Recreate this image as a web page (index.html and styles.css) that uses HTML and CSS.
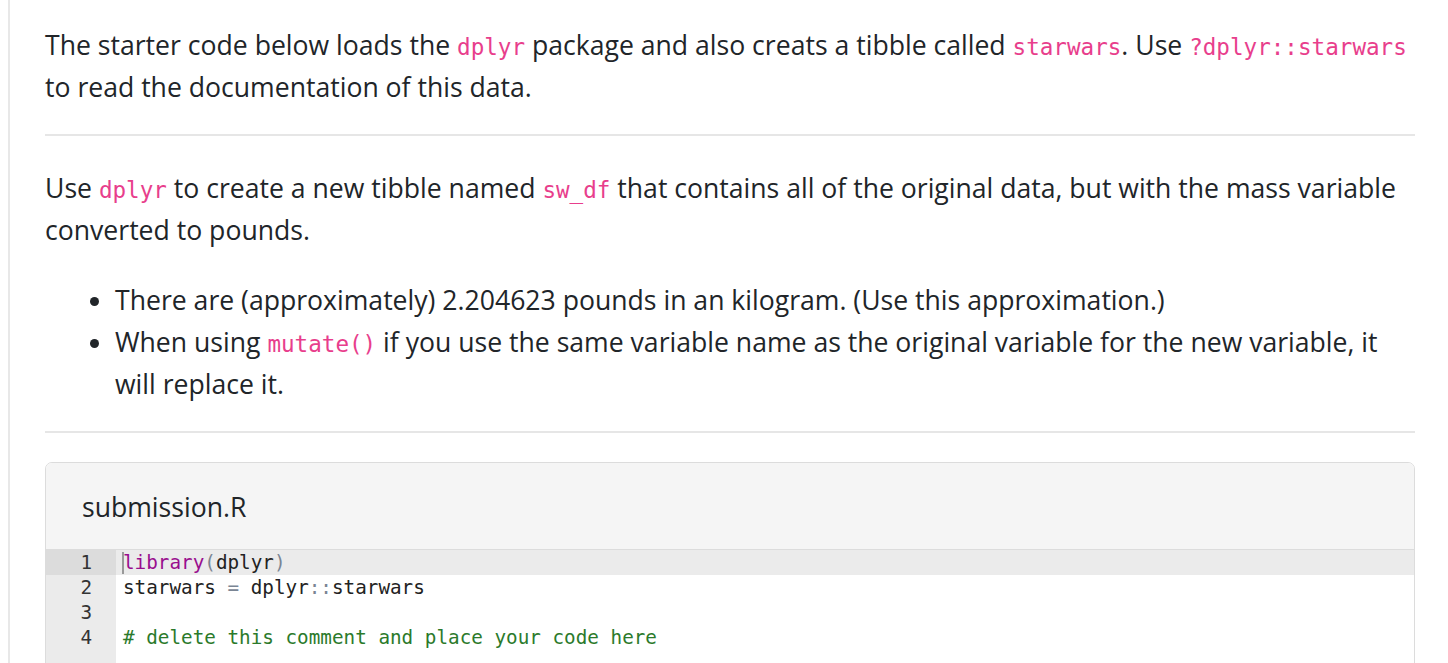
FILE: index.html
```html
<!DOCTYPE html>
<html lang="en">
<head>
<meta charset="utf-8">
<title>dplyr starwars</title>
<link rel="stylesheet" href="styles.css">
</head>
<body>
<main class="page">
  <p class="para">The starter code below loads the <code class="ic">dplyr</code> package and also creats a tibble called <code class="ic">starwars</code>. Use <code class="ic">?dplyr::starwars</code> to read the documentation of this data.</p>
  <hr class="rule">
  <p class="para">Use <code class="ic">dplyr</code> to create a new tibble named <code class="ic">sw_df</code> that contains all of the original data, but with the mass variable converted to pounds.</p>
  <ul class="list">
    <li>There are (approximately) 2.204623 pounds in an kilogram. (Use this approximation.)</li>
    <li>When using <code class="ic">mutate()</code> if you use the same variable name as the original variable for the new variable, it will replace it.</li>
  </ul>
  <hr class="rule rule-2">
  <section class="card">
    <div class="card-head">submission.R</div>
    <div class="editor">
      <div class="gutter">
        <div class="ln ln-active">1</div>
        <div class="ln">2</div>
        <div class="ln">3</div>
        <div class="ln">4</div>
      </div>
      <div class="lines">
        <div class="cl cl-active"><span class="cursor"></span><span class="kw">library</span><span class="pn">(</span>dplyr<span class="pn">)</span></div>
        <div class="cl">starwars <span class="pn">=</span> dplyr<span class="pn">::</span>starwars</div>
        <div class="cl">&nbsp;</div>
        <div class="cl"><span class="cm"># delete this comment and place your code here</span></div>
      </div>
    </div>
  </section>
</main>
</body>
</html>
```
FILE: styles.css
```css
html, body {
  margin: 0;
  padding: 0;
  background: #ffffff;
  height: 663px;
  overflow: hidden;
}

.page {
  margin-left: 8px;
  border-left: 2px solid #e8e8e8;
  padding: 24px 33px 0 35px;
  font-family: "Open Sans", "Noto Sans", sans-serif;
  font-size: 26.6px;
  line-height: 42px;
  color: #212529;
}

.para {
  margin: 0 0 26px;
}

.ic {
  font-family: "DejaVu Sans Mono", monospace;
  font-size: 22.6px;
  line-height: 1;
  color: #e83e8c;
}

.rule {
  border: 0;
  border-top: 2px solid #e6e6e6;
  margin: 0 0 31px;
}

.rule-2 {
  margin-bottom: 29px;
}

.list {
  margin: 0 0 26px;
  padding: 2px 0 0 70px;
}

.card {
  border: 1px solid #dcdcdc;
  border-radius: 7px;
  overflow: hidden;
}

.card-head {
  background: #f5f5f5;
  height: 86px;
  line-height: 88px;
  padding-left: 36px;
  border-bottom: 1px solid #dcdcdc;
}

.editor {
  display: flex;
  min-height: 200px;
  font-family: "DejaVu Sans Mono", monospace;
  font-size: 19.3px;
  line-height: 25px;
  color: #222;
}

.gutter {
  width: 70px;
  background: #ebebeb;
  flex: none;
}

.ln {
  text-align: right;
  padding-right: 24px;
  height: 25px;
  color: #333;
}

.ln-active {
  background: #dcdcdc;
}

.lines {
  flex: 1;
}

.cl {
  height: 25px;
  padding-left: 7px;
  white-space: pre;
  position: relative;
}

.cl-active {
  background: #ebebeb;
}

.cursor {
  position: absolute;
  left: 6px;
  top: 2px;
  width: 2px;
  height: 22px;
  background: #999;
}

.kw { color: #990e8e; }
.pn { color: #7a8594; }
.cm { color: #2b7a2b; }
```
